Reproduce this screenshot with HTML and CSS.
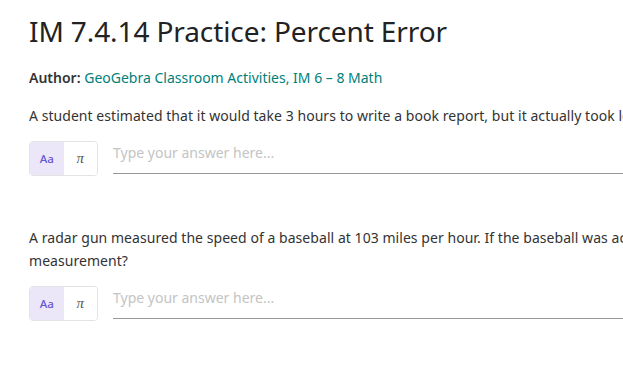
FILE: index.html
```html
<!DOCTYPE html>
<html>
<head>
<meta charset="utf-8">
<link rel="stylesheet" href="styles.css">
</head>
<body>
<div class="page">
  <h1 class="title">IM 7.4.14 Practice: Percent Error</h1>
  <p class="author"><b>Author:</b> <a class="author-link">GeoGebra Classroom Activities, IM 6 – 8 Math</a></p>
  <section class="question">
    <p class="prompt">A student estimated that it would take 3 hours to write a book report, but it actually took longer.</p>
    <div class="answer">
      <div class="toggle"><span class="seg seg-on">Aa</span><span class="seg seg-pi">π</span></div>
      <div class="field">Type your answer here...</div>
    </div>
  </section>
  <section class="question q2">
    <p class="prompt">A radar gun measured the speed of a baseball at 103 miles per hour. If the baseball was actually going 102.8 miles per hour, what was the percent error in this<br>measurement?</p>
    <div class="answer">
      <div class="toggle"><span class="seg seg-on">Aa</span><span class="seg seg-pi">π</span></div>
      <div class="field">Type your answer here...</div>
    </div>
  </section>
</div>
</body>
</html>
```
FILE: styles.css
```css
html, body { margin: 0; padding: 0; background: #fff; overflow: hidden; }
body { font-family: "Noto Sans", "Open Sans", sans-serif; color: #333; width: 623px; height: 366px; }
.page { padding: 12px 0 0 29px; width: 594px; overflow: hidden; }
.title { font-size: 28px; font-weight: 400; margin: 0; line-height: 38px; color: #222; letter-spacing: -0.1px; white-space: nowrap; }
.author { margin: 18px 0 0; font-size: 14px; line-height: 20px; color: #333; }
.author b { font-weight: 600; }
.author-link { color: #00807a; }
.question { margin-top: 16px; }
.q2 { margin-top: 50px; }
.prompt { margin: 0; font-size: 14px; line-height: 23px; color: #333; white-space: nowrap; letter-spacing: 0.05px; overflow: hidden; }
.answer { display: flex; align-items: flex-start; margin-top: 14px; }
.toggle { display: flex; flex: none; border: 1px solid #e3e3e3; border-radius: 4px; overflow: hidden; height: 33px; }
.seg { width: 33.5px; display: flex; align-items: center; justify-content: center; font-size: 11.5px; }
.seg-on { background: #ebe7f9; color: #6557d2; font-weight: 500; }
.seg-pi { color: #555; font-family: "Liberation Serif", serif; font-style: italic; font-size: 15px; background: #fff; }
.field { margin-left: 15px; flex: 1; border-bottom: 1px solid #999; height: 32px; color: #c4c4c4; font-size: 14px; line-height: 24px; }
```
